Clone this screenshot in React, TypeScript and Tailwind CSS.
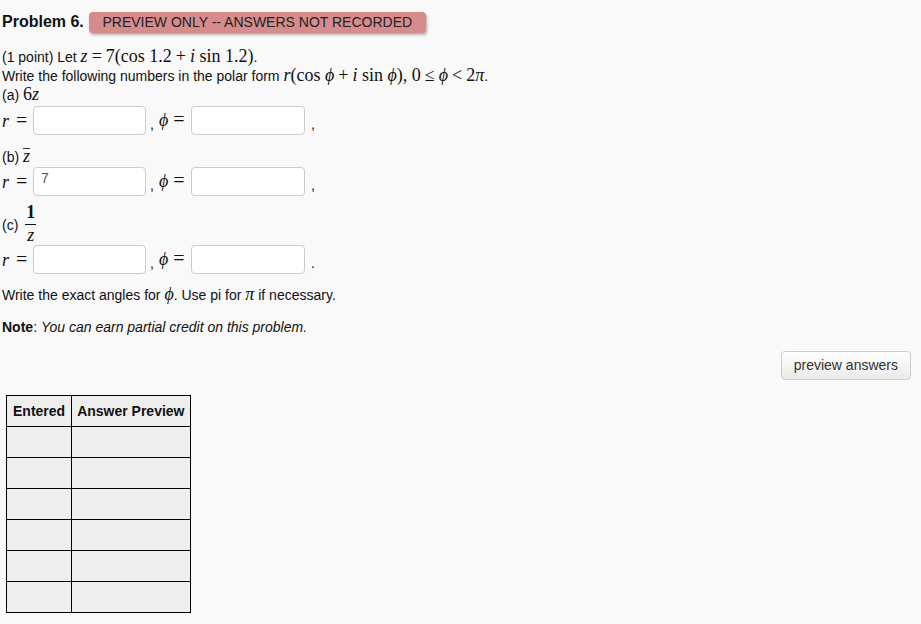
import React from 'react';

const M = ({ children }: { children: React.ReactNode }) => (
  <span className="font-['Liberation_Serif','DejaVu_Serif',serif] text-[18px] leading-[19px]">{children}</span>
);
const V = ({ children }: { children: React.ReactNode }) => (
  <i className="font-['Liberation_Serif','DejaVu_Serif',serif]">{children}</i>
);
const Op = ({ children }: { children: React.ReactNode }) => <span className="mx-[4px]">{children}</span>;

const Line = ({ children, className = '' }: { children: React.ReactNode; className?: string }) => (
  <div className={`h-[19px] leading-[19px] whitespace-nowrap ${className}`}>{children}</div>
);

const AnswerRow = ({ r = '', last = false }: { r?: string; last?: boolean }) => (
  <div className="flex items-center h-[29px]">
    <span className="w-[31px] flex items-center">
      <M>
        <V>r</V>
        <span className="ml-[7px] text-[20px]">=</span>
      </M>
    </span>
    <input
      readOnly
      value={r}
      className="w-[113px] h-[29px] bg-white border border-[#cccccc] rounded-[4px] px-[7px] pb-[7px] text-[14px] text-[#555]"
    />
    <span className="w-[45px] flex items-center">
      <span className="ml-[4px] text-[14px] mt-[8px]">,</span>
      <span className="ml-[5px]">
        <M>
          <V>ϕ</V>
          <span className="ml-[5px] text-[20px]">=</span>
        </M>
      </span>
    </span>
    <input readOnly className="w-[114px] h-[29px] bg-white border border-[#cccccc] rounded-[4px]" />
    <span className="ml-[6px] text-[14px] mt-[8px]">{last ? '.' : ','}</span>
  </div>
);

export default function App() {
  return (
    <div className="w-full min-h-[624px] bg-[#f9f9f9] text-[14px] text-[#111] font-['Liberation_Sans',Arial,sans-serif] pl-[2px] pt-[12px] pr-[10px]">
      {/* Header */}
      <div className="flex items-center h-[20px]">
        <h3 className="text-[16px] font-bold">Problem 6.</h3>
        <span className="ml-[5px] h-[21px] w-[337px] flex items-center justify-center bg-[#d68c8c] rounded-[4px] shadow-[1px_2px_3px_rgba(0,0,0,0.3)] text-[#222] text-[14px]">
          PREVIEW ONLY -- ANSWERS NOT RECORDED
        </span>
      </div>

      <div className="mt-[15px]">
        <Line>
          (1 point) Let{' '}
          <M>
            <V>z</V>
            <Op>=</Op>7(cos 1.2<Op>+</Op>
            <V>i</V> sin 1.2)
          </M>
          .
        </Line>
        <Line>
          Write the following numbers in the polar form{' '}
          <M>
            <V>r</V>(cos <V>ϕ</V>
            <Op>+</Op>
            <V>i</V> sin <V>ϕ</V>), 0<Op>≤</Op>
            <V>ϕ</V>
            <Op>&lt;</Op>2<V>π</V>
          </M>
          .
        </Line>
        <Line>
          (a){' '}
          <M>
            6<V>z</V>
          </M>
        </Line>
      </div>

      <div className="mt-[2px]">
        <AnswerRow />
      </div>

      <Line className="mt-[12px]">
        (b){' '}
        <M>
          <span className="border-t border-[#333] leading-[14px] inline-block">
            <V>z</V>
          </span>
        </M>
      </Line>

      <div className="mt-[1px]">
        <AnswerRow r="7" />
      </div>

      <div className="mt-[8px] flex items-center h-[40px]">
        <span className="mt-[2px]">(c)</span>
        <span className="ml-[6px] inline-flex flex-col items-center font-['Liberation_Serif','DejaVu_Serif',serif] text-[18px] leading-[17px]">
          <span className="font-bold px-[2px]">1</span>
          <span className="w-[11px] border-t border-[#111] mt-[3px] mb-[2px]" />
          <V>z</V>
        </span>
      </div>

      <div className="mt-[1px]">
        <AnswerRow last />
      </div>

      <Line className="mt-[11px]">
        Write the exact angles for{' '}
        <M>
          <V>ϕ</V>
        </M>
        . Use pi for{' '}
        <M>
          <V>π</V>
        </M>{' '}
        if necessary.
      </Line>

      <Line className="mt-[14px]">
        <b>Note</b>: <i>You can earn partial credit on this problem.</i>
      </Line>

      <div className="flex justify-end mt-[14px]">
        <button className="h-[29px] px-[12px] bg-gradient-to-b from-white to-[#eaeaea] border border-[#cccccc] rounded-[4px] text-[14px] text-[#333]">
          preview answers
        </button>
      </div>

      <table className="ml-[4px] mt-[15px] border-collapse border border-black bg-[#eeeeee] text-[14px]">
        <thead>
          <tr className="h-[31px]">
            <th className="border border-black w-[64px] px-[6px] font-bold text-left">Entered</th>
            <th className="border border-black w-[119px] px-[5px] font-bold text-left">Answer Preview</th>
          </tr>
        </thead>
        <tbody>
          {[0, 1, 2, 3, 4, 5].map((i) => (
            <tr key={i} className="h-[31px]">
              <td className="border border-black" />
              <td className="border border-black" />
            </tr>
          ))}
        </tbody>
      </table>
    </div>
  );
}
